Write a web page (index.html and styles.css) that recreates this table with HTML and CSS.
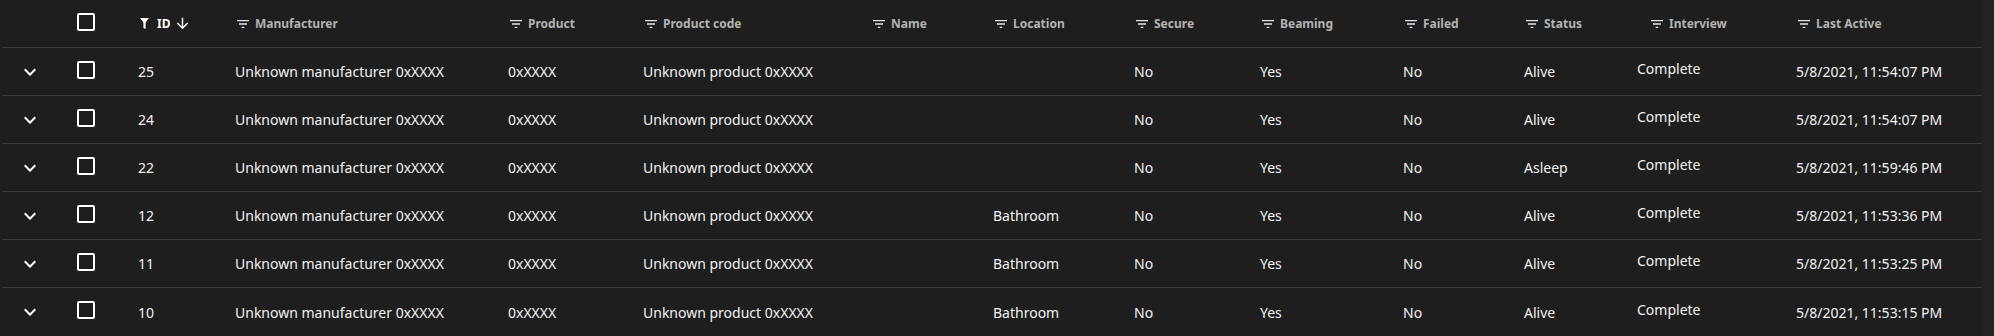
FILE: index.html
```html
<!DOCTYPE html>
<html>
<head>
<meta charset="utf-8">
<link rel="stylesheet" href="styles.css">
</head>
<body>
<div class="page">
  <div class="table-wrap">
    <table class="grid">
      <colgroup>
        <col class="w-expand"><col class="w-check"><col class="w-id"><col class="w-manu"><col class="w-prod"><col class="w-code"><col class="w-name"><col class="w-loc"><col class="w-secure"><col class="w-beam"><col class="w-failed"><col class="w-status"><col class="w-interview"><col class="w-last">
      </colgroup>
      <thead>
        <tr>
          <th></th>
          <th><div class="cb"></div></th>
          <th class="active"><span class="hd"><svg class="funnel" viewBox="0 0 8 10"><path d="M0 0H8L5 4.2V10L3 9V4.2Z" fill="currentColor"/></svg><span>ID</span><svg class="arrow" viewBox="0 0 24 24"><path d="M20 12l-1.41-1.41L13 16.17V4h-2v12.17l-5.58-5.59L4 12l8 8 8-8z" fill="currentColor"/></svg></span></th>
          <th><span class="hd"><svg class="fl" viewBox="0 0 24 24"><path d="M10 18h4v-2h-4v2zM3 6v2h18V6H3zm3 7h12v-2H6v2z" fill="currentColor"/></svg><span>Manufacturer</span></span></th>
          <th><span class="hd"><svg class="fl" viewBox="0 0 24 24"><path d="M10 18h4v-2h-4v2zM3 6v2h18V6H3zm3 7h12v-2H6v2z" fill="currentColor"/></svg><span>Product</span></span></th>
          <th><span class="hd"><svg class="fl" viewBox="0 0 24 24"><path d="M10 18h4v-2h-4v2zM3 6v2h18V6H3zm3 7h12v-2H6v2z" fill="currentColor"/></svg><span>Product code</span></span></th>
          <th><span class="hd"><svg class="fl" viewBox="0 0 24 24"><path d="M10 18h4v-2h-4v2zM3 6v2h18V6H3zm3 7h12v-2H6v2z" fill="currentColor"/></svg><span>Name</span></span></th>
          <th><span class="hd"><svg class="fl" viewBox="0 0 24 24"><path d="M10 18h4v-2h-4v2zM3 6v2h18V6H3zm3 7h12v-2H6v2z" fill="currentColor"/></svg><span>Location</span></span></th>
          <th><span class="hd"><svg class="fl" viewBox="0 0 24 24"><path d="M10 18h4v-2h-4v2zM3 6v2h18V6H3zm3 7h12v-2H6v2z" fill="currentColor"/></svg><span>Secure</span></span></th>
          <th><span class="hd"><svg class="fl" viewBox="0 0 24 24"><path d="M10 18h4v-2h-4v2zM3 6v2h18V6H3zm3 7h12v-2H6v2z" fill="currentColor"/></svg><span>Beaming</span></span></th>
          <th><span class="hd"><svg class="fl" viewBox="0 0 24 24"><path d="M10 18h4v-2h-4v2zM3 6v2h18V6H3zm3 7h12v-2H6v2z" fill="currentColor"/></svg><span>Failed</span></span></th>
          <th><span class="hd"><svg class="fl" viewBox="0 0 24 24"><path d="M10 18h4v-2h-4v2zM3 6v2h18V6H3zm3 7h12v-2H6v2z" fill="currentColor"/></svg><span>Status</span></span></th>
          <th><span class="hd"><svg class="fl" viewBox="0 0 24 24"><path d="M10 18h4v-2h-4v2zM3 6v2h18V6H3zm3 7h12v-2H6v2z" fill="currentColor"/></svg><span>Interview</span></span></th>
          <th><span class="hd"><svg class="fl" viewBox="0 0 24 24"><path d="M10 18h4v-2h-4v2zM3 6v2h18V6H3zm3 7h12v-2H6v2z" fill="currentColor"/></svg><span>Last Active</span></span></th>
        </tr>
      </thead>
      <tbody>
        <tr>
          <td><svg class="chev" viewBox="0 0 24 24"><path d="M7.41 8.59L12 13.17l4.59-4.58L18 10l-6 6-6-6 1.41-1.41z" fill="currentColor"/></svg></td>
          <td><div class="cb"></div></td>
          <td>25</td><td>Unknown manufacturer 0xXXXX</td><td>0xXXXX</td><td>Unknown product 0xXXXX</td><td></td><td></td><td>No</td><td>Yes</td><td>No</td><td>Alive</td><td class="interview"><span class="chip">Complete</span></td><td>5/8/2021, 11:54:07 PM</td>
        </tr>
        <tr>
          <td><svg class="chev" viewBox="0 0 24 24"><path d="M7.41 8.59L12 13.17l4.59-4.58L18 10l-6 6-6-6 1.41-1.41z" fill="currentColor"/></svg></td>
          <td><div class="cb"></div></td>
          <td>24</td><td>Unknown manufacturer 0xXXXX</td><td>0xXXXX</td><td>Unknown product 0xXXXX</td><td></td><td></td><td>No</td><td>Yes</td><td>No</td><td>Alive</td><td class="interview"><span class="chip">Complete</span></td><td>5/8/2021, 11:54:07 PM</td>
        </tr>
        <tr>
          <td><svg class="chev" viewBox="0 0 24 24"><path d="M7.41 8.59L12 13.17l4.59-4.58L18 10l-6 6-6-6 1.41-1.41z" fill="currentColor"/></svg></td>
          <td><div class="cb"></div></td>
          <td>22</td><td>Unknown manufacturer 0xXXXX</td><td>0xXXXX</td><td>Unknown product 0xXXXX</td><td></td><td></td><td>No</td><td>Yes</td><td>No</td><td>Asleep</td><td class="interview"><span class="chip">Complete</span></td><td>5/8/2021, 11:59:46 PM</td>
        </tr>
        <tr>
          <td><svg class="chev" viewBox="0 0 24 24"><path d="M7.41 8.59L12 13.17l4.59-4.58L18 10l-6 6-6-6 1.41-1.41z" fill="currentColor"/></svg></td>
          <td><div class="cb"></div></td>
          <td>12</td><td>Unknown manufacturer 0xXXXX</td><td>0xXXXX</td><td>Unknown product 0xXXXX</td><td></td><td>Bathroom</td><td>No</td><td>Yes</td><td>No</td><td>Alive</td><td class="interview"><span class="chip">Complete</span></td><td>5/8/2021, 11:53:36 PM</td>
        </tr>
        <tr>
          <td><svg class="chev" viewBox="0 0 24 24"><path d="M7.41 8.59L12 13.17l4.59-4.58L18 10l-6 6-6-6 1.41-1.41z" fill="currentColor"/></svg></td>
          <td><div class="cb"></div></td>
          <td>11</td><td>Unknown manufacturer 0xXXXX</td><td>0xXXXX</td><td>Unknown product 0xXXXX</td><td></td><td>Bathroom</td><td>No</td><td>Yes</td><td>No</td><td>Alive</td><td class="interview"><span class="chip">Complete</span></td><td>5/8/2021, 11:53:25 PM</td>
        </tr>
        <tr>
          <td><svg class="chev" viewBox="0 0 24 24"><path d="M7.41 8.59L12 13.17l4.59-4.58L18 10l-6 6-6-6 1.41-1.41z" fill="currentColor"/></svg></td>
          <td><div class="cb"></div></td>
          <td>10</td><td>Unknown manufacturer 0xXXXX</td><td>0xXXXX</td><td>Unknown product 0xXXXX</td><td></td><td>Bathroom</td><td>No</td><td>Yes</td><td>No</td><td>Alive</td><td class="interview"><span class="chip">Complete</span></td><td>5/8/2021, 11:53:15 PM</td>
        </tr>
      </tbody>
    </table>
  </div>
  <div class="scroll-strip"></div>
</div>
</body>
</html>
```

FILE: styles.css
```css
html, body {
  margin: 0;
  padding: 0;
  background: #1e1e1e;
  height: 336px;
  overflow: hidden;
}
.page {
  display: flex;
  width: 1994px;
  height: 336px;
  font-family: "Noto Sans", "Open Sans", sans-serif;
}
.table-wrap {
  padding-left: 2px;
  width: 1980px;
  flex: none;
}
.scroll-strip {
  flex: 1;
  background: #212121;
}
.grid {
  width: 1980px;
  table-layout: fixed;
  border-collapse: separate;
  border-spacing: 0;
}
.w-expand { width: 56px; }
.w-check { width: 64px; }
.w-id { width: 97px; }
.w-manu { width: 273px; }
.w-prod { width: 135px; }
.w-code { width: 228px; }
.w-name { width: 122px; }
.w-loc { width: 141px; }
.w-secure { width: 126px; }
.w-beam { width: 143px; }
.w-failed { width: 121px; }
.w-status { width: 125px; }
.w-interview { width: 147px; }
.w-last { width: 202px; }

th, td {
  box-sizing: border-box;
  height: 48px;
  padding: 0 16px;
  text-align: left;
  white-space: nowrap;
  vertical-align: middle;
  border-bottom: 1px solid #3a3a3a;
}
th {
  font-size: 12px;
  font-weight: 700;
  color: #b3b3b3;
}
th.active { color: #ffffff; }
td {
  font-size: 14px;
  color: #f2f2f2;
}
tbody tr:last-child td { border-bottom: none; }

.hd {
  display: flex;
  align-items: center;
}
.fl {
  width: 16px;
  height: 16px;
  margin-right: 4px;
  color: #e6e6e6;
  flex: none;
}
.funnel {
  width: 9px;
  height: 11px;
  margin-left: 2px;
  margin-right: 8px;
  flex: none;
}
.arrow {
  width: 17px;
  height: 17px;
  margin-left: 4px;
  flex: none;
}
.chev {
  display: block;
  width: 24px;
  height: 24px;
  color: #ffffff;
}
.cb {
  width: 14px;
  height: 14px;
  border: 2px solid #ffffff;
  border-radius: 2px;
  margin: 3px 3px 7px 3px;
}
td.interview { padding-left: 4px; }
.chip {
  display: inline-block;
  padding-bottom: 6px;
}
```
